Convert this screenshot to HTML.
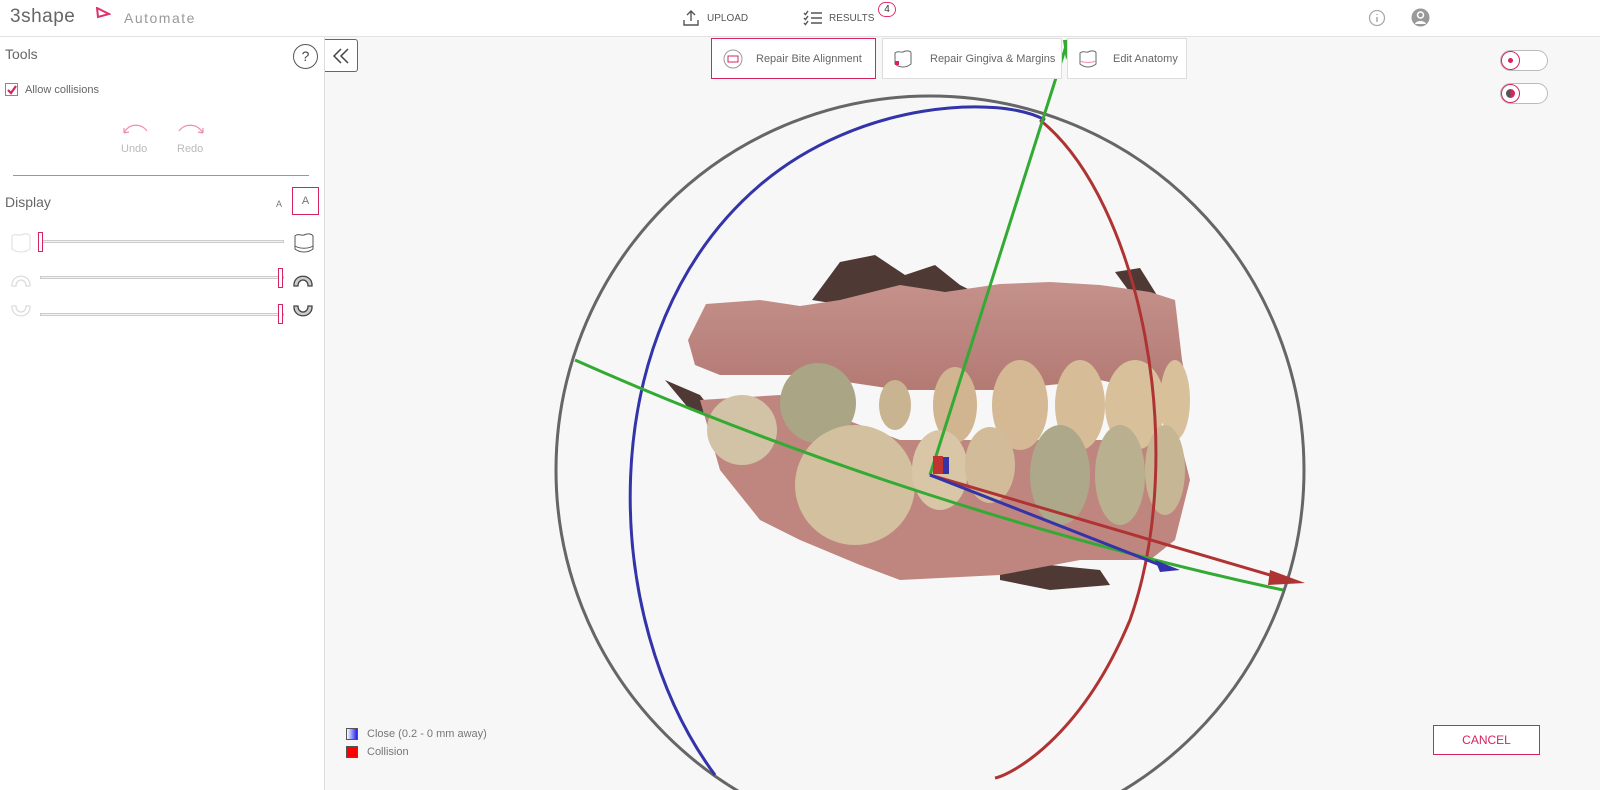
<!DOCTYPE html>
<html style="overflow:hidden;width:1600px;height:790px"><head><meta charset="utf-8"><style>
*{margin:0;padding:0;box-sizing:border-box}
body{width:1600px;height:790px;overflow:hidden;background:#f7f7f7;font-family:"Liberation Sans",sans-serif;color:#555;position:relative}
.top{position:absolute;left:0;top:0;width:1600px;height:37px;background:#fff;border-bottom:1px solid #e2e2e2}
.side{position:absolute;left:0;top:37px;width:325px;height:753px;background:#fff;border-right:1px solid #ddd}
.abs{position:absolute;white-space:nowrap}
.tab{position:absolute;top:38px;height:41px;background:#fff;border:1px solid #ddd;font-size:11px;color:#666;display:flex;align-items:center;white-space:nowrap;overflow:hidden}
.slider{position:absolute;left:40px;width:244px;height:3px;border:1px solid #ccc;background:#f2f2f2}
.thumb{position:absolute;width:5px;height:20px;border:1px solid #d6245e;background:#fff}
</style></head><body>
<div class="top"></div>
<div class="abs" style="left:10px;top:6px;font-size:19px;color:#666;letter-spacing:0.5px">3shape</div>
<svg class="abs" style="left:95px;top:7px" width="16" height="12"><path d="M2 1 L14 7 L3 10 Z" fill="none" stroke="#e0306a" stroke-width="2"/></svg>
<div class="abs" style="left:124px;top:10px;font-size:14px;color:#999;letter-spacing:1.5px">Automate</div>
<svg class="abs" style="left:682px;top:9px" width="18" height="18"><path d="M9 2v10M5 6l4-4 4 4M2 11v5h14v-5" fill="none" stroke="#555" stroke-width="1.4"/></svg>
<div class="abs" style="left:707px;top:13px;font-size:10px;color:#555">UPLOAD</div>
<svg class="abs" style="left:803px;top:9px" width="20" height="18"><path d="M1 4l1.5 1.5L5 2M1 9l1.5 1.5L5 7M1 14l1.5 1.5L5 12M8 4h11M8 9h11M8 14h11" fill="none" stroke="#555" stroke-width="1.4"/></svg>
<div class="abs" style="left:829px;top:13px;font-size:10px;color:#555">RESULTS</div>
<div class="abs" style="left:878px;top:2px;width:18px;height:15px;border:1px solid #e0306a;border-radius:8px;font-size:10px;text-align:center;line-height:13px;color:#333">4</div>
<svg class="abs" style="left:1368px;top:9px" width="18" height="18"><circle cx="9" cy="9" r="7.5" fill="none" stroke="#aaa" stroke-width="1.3"/><path d="M9 8v5M9 5v1" stroke="#aaa" stroke-width="1.5"/></svg>
<svg class="abs" style="left:1411px;top:8px" width="19" height="19"><circle cx="9.5" cy="9.5" r="9" fill="#999"/><circle cx="9.5" cy="7" r="3" fill="none" stroke="#fff" stroke-width="1.5"/><path d="M4 16c1-4 10-4 11 0" fill="#fff"/></svg>

<div class="side"></div>
<div class="abs" style="left:5px;top:46px;font-size:14px;color:#666">Tools</div>
<div class="abs" style="left:293px;top:44px;width:25px;height:25px;border:1.3px solid #555;border-radius:50%;text-align:center;line-height:23px;font-size:14px;color:#444">?</div>
<div class="abs" style="left:5px;top:83px;width:13px;height:13px;border:1px solid #888"></div>
<svg class="abs" style="left:6px;top:84px" width="12" height="12"><path d="M2 6l3 3 5-7" fill="none" stroke="#d6245e" stroke-width="2.2"/></svg>
<div class="abs" style="left:25px;top:84px;font-size:11px;color:#666">Allow collisions</div>
<svg class="abs" style="left:121px;top:121px" width="30" height="14"><path d="M3 12C8 2 20 2 26 10M3 12L3 7M3 12L8 11" fill="none" stroke="#f08cae" stroke-width="1.2"/></svg>
<svg class="abs" style="left:176px;top:121px" width="30" height="14"><path d="M3 10C9 2 21 2 27 12M27 12L27 7M27 12L22 11" fill="none" stroke="#f08cae" stroke-width="1.2"/></svg>
<div class="abs" style="left:121px;top:143px;font-size:11px;color:#bbb">Undo</div>
<div class="abs" style="left:177px;top:143px;font-size:11px;color:#bbb">Redo</div>
<div class="abs" style="left:13px;top:175px;width:296px;height:1px;background:#999"></div>
<div class="abs" style="left:5px;top:194px;font-size:14px;color:#666">Display</div>
<div class="abs" style="left:276px;top:199px;font-size:9px;color:#777">A</div>
<div class="abs" style="left:292px;top:187px;width:27px;height:28px;border:1px solid #d6245e;font-size:11px;text-align:center;line-height:26px;color:#777">A</div>

<div class="slider" style="top:240px"></div>
<div class="slider" style="top:276px"></div>
<div class="slider" style="top:313px"></div>
<div class="thumb" style="left:38px;top:232px"></div>
<div class="thumb" style="left:278px;top:268px"></div>
<div class="thumb" style="left:278px;top:304px"></div>
<svg class="abs" style="left:10px;top:232px" width="22" height="22"><path d="M2 4c3-3 6 0 9-1 4-2 8-1 9 1v13c-5 4-13 4-18 0z" fill="none" stroke="#ddd"/></svg>
<svg class="abs" style="left:293px;top:232px" width="22" height="22"><path d="M2 4c3-3 6 0 9-1 4-2 8-1 9 1v13c-5 4-13 4-18 0z M2 14c5 3 13 3 18 0" fill="none" stroke="#555"/></svg>
<svg class="abs" style="left:10px;top:268px" width="22" height="20"><path d="M2 18C1 5 21 5 20 18h-4C16 10 6 10 6 18z" fill="none" stroke="#ddd" stroke-width="1.3"/></svg>
<svg class="abs" style="left:292px;top:268px" width="22" height="20"><path d="M2 18C1 5 21 5 20 18h-4C16 10 6 10 6 18z" fill="#ccc" stroke="#444" stroke-width="1.3"/></svg>
<svg class="abs" style="left:10px;top:304px" width="22" height="20"><path d="M2 2C1 15 21 15 20 2h-4C16 10 6 10 6 2z" fill="none" stroke="#ddd" stroke-width="1.3"/></svg>
<svg class="abs" style="left:292px;top:304px" width="22" height="20"><path d="M2 2C1 15 21 15 20 2h-4C16 10 6 10 6 2z" fill="#ccc" stroke="#444" stroke-width="1.3"/></svg>

<div class="abs" style="left:325px;top:39px;width:33px;height:33px;background:#fff;border:1px solid #666;border-left:none;border-radius:0 3px 3px 0"></div>
<svg class="abs" style="left:331px;top:46px" width="22" height="20"><path d="M10 3L3 10l7 7M17 3l-7 7 7 7" fill="none" stroke="#444" stroke-width="1.5"/></svg>

<svg class="abs" style="left:0;top:0;overflow:hidden" width="1600" height="790">
 <defs><linearGradient id="g" x1="0" y1="0" x2="0" y2="1"><stop offset="0" stop-color="#c5918b"/><stop offset="1" stop-color="#b27872"/></linearGradient></defs>
 <circle cx="930" cy="470" r="374" fill="none" stroke="#666" stroke-width="3"/>
 <path d="M812 300L840 262 875 255 905 275 935 265 960 285 990 300 1020 290 1000 330Z" fill="#4e3935"/>
 <path d="M1115 272L1140 268 1160 300 1170 330 1150 320Z" fill="#4e3935"/>
 <path d="M665 380L700 395 720 420 690 410Z" fill="#4e3935"/>
 <path d="M1000 560L1100 570 1110 585 1050 590 1000 580Z" fill="#4e3935"/>
 <path d="M706 304L760 300 800 306 840 300 900 285 945 292 1000 284 1050 282 1100 285 1150 292 1175 300 1182 360 1190 400 1100 380 1000 390 900 390 800 375 720 375 695 365 688 340Z" fill="url(#g)"/>
 <path d="M700 400L780 395 900 440 1000 440 1100 440 1180 440 1190 480 1175 540 1150 560 1080 560 1000 575 900 580 860 565 800 540 760 520 720 470Z" fill="#bf8680"/>
 <ellipse cx="818" cy="403" rx="38" ry="40" fill="#a9a585"/>
 <ellipse cx="895" cy="405" rx="16" ry="25" fill="#c8b490"/>
 <ellipse cx="955" cy="405" rx="22" ry="38" fill="#d0b590"/>
 <ellipse cx="1020" cy="405" rx="28" ry="45" fill="#d4b994"/>
 <ellipse cx="1080" cy="405" rx="25" ry="45" fill="#d6bd98"/>
 <ellipse cx="1135" cy="405" rx="30" ry="45" fill="#d8c09b"/>
 <ellipse cx="1175" cy="400" rx="15" ry="40" fill="#d8c09b"/>
 <ellipse cx="742" cy="430" rx="35" ry="35" fill="#d3c3a6"/>
 <ellipse cx="855" cy="485" rx="60" ry="60" fill="#d2c09f"/>
 <ellipse cx="940" cy="470" rx="28" ry="40" fill="#d8c6a6"/>
 <ellipse cx="990" cy="465" rx="25" ry="38" fill="#d2bb98"/>
 <ellipse cx="1060" cy="475" rx="30" ry="50" fill="#aca889"/>
 <ellipse cx="1120" cy="475" rx="25" ry="50" fill="#b8b08f"/>
 <ellipse cx="1165" cy="470" rx="20" ry="45" fill="#c7b693"/>
 <path d="M715 775C600 620 590 330 760 185C860 100 1000 95 1045 120" fill="none" stroke="#3333aa" stroke-width="3"/>
 <path d="M1040 120C1140 200 1190 450 1130 620C1080 740 1010 775 995 778" fill="none" stroke="#b03333" stroke-width="3"/>
 <path d="M575 360C800 460 1050 540 1283 590" fill="none" stroke="#33aa33" stroke-width="3"/>
 <path d="M930 475L1068 40" stroke="#33aa33" stroke-width="3"/>
 <path d="M1063 40L1073 40 1066 60Z" fill="#33aa33"/>
 <path d="M930 475L1280 578" stroke="#b03333" stroke-width="3"/>
 <path d="M1270 570L1305 583 1268 585Z" fill="#b03333"/>
 <path d="M930 475L1160 565" stroke="#3333aa" stroke-width="3"/>
 <path d="M1155 560L1180 570 1160 572Z" fill="#3333aa"/>
 <rect x="933" y="456" width="10" height="18" fill="#c03333"/><rect x="943" y="457" width="6" height="17" fill="#3333aa"/>
</svg>

<div class="tab" style="left:711px;border-color:#d6245e;width:165px">
<svg style="margin:0 13px 0 11px;flex:none" width="20" height="20"><circle cx="10" cy="10" r="9" fill="none" stroke="#999"/><rect x="5" y="7" width="10" height="6" fill="none" stroke="#d6245e"/></svg>Repair Bite Alignment</div>
<div class="tab" style="left:882px;width:180px">
<svg style="margin:0 17px 0 10px;flex:none" width="20" height="20"><path d="M2 4c3-3 6 0 8-1 4-2 8-1 8 1v11c-5 4-11 4-16 0z" fill="none" stroke="#666"/><rect x="2" y="12" width="4" height="4" fill="#d6245e"/></svg>Repair Gingiva &amp; Margins</div>
<div class="tab" style="left:1067px;width:120px">
<svg style="margin:0 15px 0 10px;flex:none" width="20" height="20"><path d="M2 4c3-3 6 0 8-1 4-2 8-1 8 1v11c-5 4-11 4-16 0z" fill="none" stroke="#666"/><path d="M2 12c5 2 11 2 16 0" stroke="#f08cae" fill="none"/></svg>Edit Anatomy</div>

<div class="abs" style="left:1500px;top:50px;width:48px;height:21px;border:1px solid #bbb;border-radius:11px;background:#fff"></div>
<div class="abs" style="left:1501px;top:51px;width:19px;height:19px;border:1.5px solid #d6245e;border-radius:50%;background:#fff"></div>
<div class="abs" style="left:1508px;top:58px;width:5px;height:5px;border-radius:50%;background:#d6245e"></div>
<div class="abs" style="left:1500px;top:83px;width:48px;height:21px;border:1px solid #bbb;border-radius:11px;background:#fff"></div>
<div class="abs" style="left:1501px;top:84px;width:19px;height:19px;border:1.5px solid #d6245e;border-radius:50%;background:#fff"></div>
<div class="abs" style="left:1506px;top:89px;width:9px;height:9px;border-radius:50%;background:linear-gradient(90deg,#555 50%,#d6245e 50%)"></div>

<div class="abs" style="left:346px;top:728px;width:12px;height:12px;border:1px solid #555;background:linear-gradient(90deg,#fff,#2222ee)"></div>
<div class="abs" style="left:367px;top:728px;font-size:11px;color:#777">Close (0.2 - 0 mm away)</div>
<div class="abs" style="left:346px;top:746px;width:12px;height:12px;border:1px solid #555;background:#f00"></div>
<div class="abs" style="left:367px;top:746px;font-size:11px;color:#777">Collision</div>
<div class="abs" style="left:1433px;top:725px;width:107px;height:30px;border:1px solid #d6245e;background:#fff;font-size:12px;color:#d6245e;text-align:center;line-height:28px">CANCEL</div>
</body></html>
